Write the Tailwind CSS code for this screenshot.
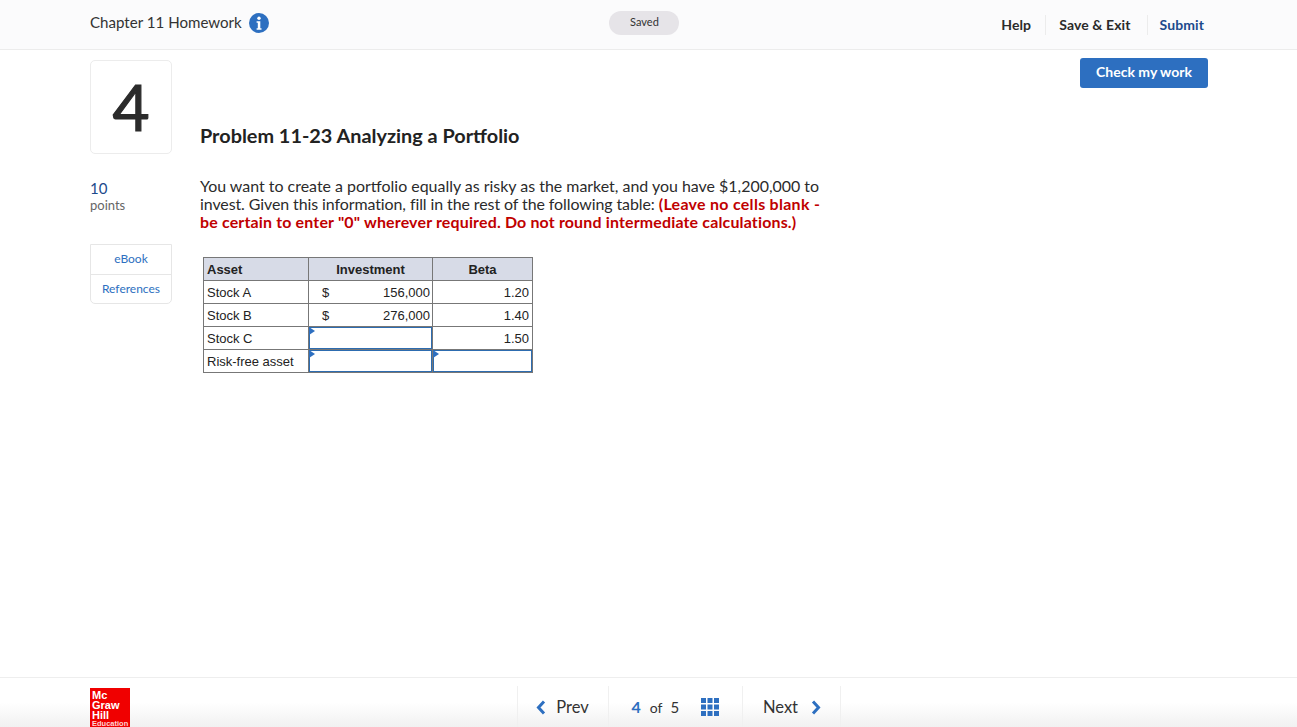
<!DOCTYPE html>
<html lang="en">
  <head>
    <meta charset="UTF-8" />
    <title>Chapter 11 Homework</title>
    <script src="https://cdn.jsdelivr.net/npm/@tailwindcss/browser@4"></script>
  </head>
  <body class="bg-white h-[727px] w-[1297px] overflow-hidden flex flex-col font-['Lato',sans-serif] text-[#2b2b2b]">
    <!-- Top bar -->
    <header class="h-[50px] shrink-0 bg-[#fbfbfc] border-b border-[#ececec] pl-[90px] pr-[93px] grid grid-cols-3 items-center">
      <div class="flex items-center gap-[7px] -mt-[3px]">
        <span class="text-[15.1px] text-[#333] -translate-y-[1px]">Chapter 11 Homework</span>
        <svg width="20" height="20" viewBox="0 0 20 20">
          <circle cx="10" cy="10" r="10" fill="#2d6fc0" />
          <circle cx="10" cy="5.2" r="1.7" fill="#fff" />
          <path d="M7.6 8.2h3.7v7h1.2v1.5H7.6v-1.5h1.2v-5.5H7.6z" fill="#fff" />
        </svg>
      </div>
      <div class="flex justify-center pr-[5px] -mt-[4px]">
        <span class="w-[70px] h-[24px] rounded-full bg-[#e6e4e8] text-[11px] flex items-center justify-center text-[#333]">Saved</span>
      </div>
      <nav class="flex justify-end items-center text-[14px] font-bold tracking-[0.1px]">
        <a class="pr-[14px]">Help</a>
        <a class="pl-[13px] pr-[16px] border-l border-[#ececec] h-[20px] leading-[20px]">Save &amp; Exit</a>
        <a class="pl-[12px] border-l border-[#ececec] h-[20px] leading-[20px] text-[#1c4a8c]">Submit</a>
      </nav>
    </header>

    <!-- Question area -->
    <main class="flex-1 pl-[90px] pr-[89px] pt-[8px] flex">
      <aside class="w-[82px] shrink-0 pt-[2px]">
        <div class="h-[94px] border border-[#ececec] rounded-[5px] flex items-center justify-center text-[64px] leading-none text-[#2b2b2b] [-webkit-text-stroke:1.2px_#2b2b2b]">4</div>
        <div class="mt-[25px] text-[15px] leading-[18px] text-[#1c4a8c]">10</div>
        <div class="text-[13px] leading-[17px] text-[#666]">points</div>
        <div class="mt-[30px] border border-[#e6e6e6] rounded-b-[5px] text-[12px] text-[#2d6fc0] text-center">
          <div class="h-[30px] leading-[28px] border-b border-[#e6e6e6]">eBook</div>
          <div class="h-[28px] leading-[28px]">References</div>
        </div>
      </aside>

      <section class="ml-[28px] flex-1 relative">
        <button class="absolute right-0 top-0 w-[128px] h-[30px] pb-[3px] rounded-[3px] bg-[#2d6fc0] text-white text-[14px] font-bold">Check my work</button>
        <h1 class="mt-[65px] text-[19.85px] leading-[24px] font-bold text-[#222]">Problem 11-23 Analyzing a Portfolio</h1>
        <p class="mt-[30px] w-[640px] text-[15.95px] leading-[18px] text-[#2b2b2b]">
          You want to create a portfolio equally as risky as the market, and you have $1,200,000 to<br />
          <span class="tracking-[-0.08px]">invest. Given this information, fill in the rest of the following table:</span>
          <b class="text-[#c00000] tracking-[0.3px]">(Leave no cells blank -</b><br />
          <b class="text-[#c00000] tracking-[0.17px]">be certain to enter "0" wherever required. Do not round intermediate calculations.)</b>
        </p>

        <table class="mt-[26px] ml-[3px] w-[329px] table-fixed border-collapse font-['Liberation_Sans',sans-serif] text-[13px] text-[#222]">
          <colgroup>
            <col class="w-[105px]" />
            <col class="w-[124px]" />
            <col class="w-[100px]" />
          </colgroup>
          <thead>
            <tr class="h-[23px] bg-[#d7dbe7] font-bold">
              <th class="border border-[#777] px-[3px] pt-[1px] text-left">Asset</th>
              <th class="border border-[#777] pt-[1px] text-center">Investment</th>
              <th class="border border-[#777] pt-[1px] text-center">Beta</th>
            </tr>
          </thead>
          <tbody>
            <tr class="h-[23px]">
              <td class="border border-[#777] px-[3px] pt-[1px]">Stock A</td>
              <td class="border border-[#777] px-[2px] pt-[1px]">
                <div class="flex justify-between pl-[11px]"><span>$</span><span>156,000</span></div>
              </td>
              <td class="border border-[#777] px-[3px] pt-[1px] text-right">1.20</td>
            </tr>
            <tr class="h-[23px]">
              <td class="border border-[#777] px-[3px] pt-[1px]">Stock B</td>
              <td class="border border-[#777] px-[2px] pt-[1px]">
                <div class="flex justify-between pl-[11px]"><span>$</span><span>276,000</span></div>
              </td>
              <td class="border border-[#777] px-[3px] pt-[1px] text-right">1.40</td>
            </tr>
            <tr class="h-[23px]">
              <td class="border border-[#777] px-[3px] pt-[1px]">Stock C</td>
              <td class="border border-[#777] p-0 relative">
                <div class="h-[22px] border border-[#2d6cb0]"></div>
                <svg class="absolute left-0 top-0" width="6" height="8" viewBox="0 0 6 8"><path d="M0 0l6 4-6 4z" fill="#2d6fc0" /></svg>
              </td>
              <td class="border border-[#777] px-[3px] pt-[1px] text-right">1.50</td>
            </tr>
            <tr class="h-[23px]">
              <td class="border border-[#777] px-[3px] pt-[1px]">Risk-free asset</td>
              <td class="border border-[#777] p-0 relative">
                <div class="h-[22px] border border-[#2d6cb0]"></div>
                <svg class="absolute left-0 top-0" width="6" height="8" viewBox="0 0 6 8"><path d="M0 0l6 4-6 4z" fill="#2d6fc0" /></svg>
              </td>
              <td class="border border-[#777] p-0 relative">
                <div class="h-[22px] border border-[#2d6cb0]"></div>
                <svg class="absolute left-0 top-0" width="6" height="8" viewBox="0 0 6 8"><path d="M0 0l6 4-6 4z" fill="#2d6fc0" /></svg>
              </td>
            </tr>
          </tbody>
        </table>
      </section>
    </main>

    <!-- Footer -->
    <footer class="h-[50px] shrink-0 border-t border-[#eeeeee] bg-gradient-to-b from-white from-50% to-[#f1f1f1] pl-[90px] relative flex justify-center">
      <div class="absolute left-[90px] top-[10px] w-[40px] h-[40px] bg-[#f00000] text-white font-bold font-['Liberation_Sans',sans-serif] text-[11px] leading-[10px] pl-[2px] pt-[2px] overflow-hidden">
        Mc<br />Graw<br />Hill<br /><span class="text-[7.5px] block -mt-[1px] text-[#ffd5d5]">Education</span>
      </div>
      <div class="flex -ml-[30px] pt-[8px] h-[50px] text-[16.5px] text-[#333]">
        <div class="w-[92px] border-x border-[#f0f0f0] flex items-center justify-center gap-[10px]">
          <svg width="10" height="15" viewBox="0 0 10 15"><path d="M8 1.500L2.500 7.500 8 13.500" fill="none" stroke="#2d6fc0" stroke-width="3" /></svg>
          <span>Prev</span>
        </div>
        <div class="w-[134px] border-r border-[#f0f0f0] flex items-center pl-[23px]">
          <b class="text-[#2d6fc0] text-[16px]">4</b>
          <span class="ml-[9px] text-[14px]">of</span>
          <span class="ml-[8px] text-[15px]">5</span>
          <svg class="ml-[22px]" width="18" height="18" viewBox="0 0 18 18" fill="#2d6fc0">
            <rect width="5" height="5" /><rect x="6.500" width="5" height="5" /><rect x="13" width="5" height="5" />
            <rect y="6.500" width="5" height="5" /><rect x="6.500" y="6.500" width="5" height="5" /><rect x="13" y="6.500" width="5" height="5" />
            <rect y="13" width="5" height="5" /><rect x="6.500" y="13" width="5" height="5" /><rect x="13" y="13" width="5" height="5" />
          </svg>
        </div>
        <div class="w-[98px] border-r border-[#f0f0f0] flex items-center justify-center gap-[13px] pl-[2px]">
          <span>Next</span>
          <svg width="10" height="15" viewBox="0 0 10 15"><path d="M2 1.500L7.500 7.500 2 13.500" fill="none" stroke="#2d6fc0" stroke-width="3" /></svg>
        </div>
      </div>
    </footer>
  </body>
</html>
